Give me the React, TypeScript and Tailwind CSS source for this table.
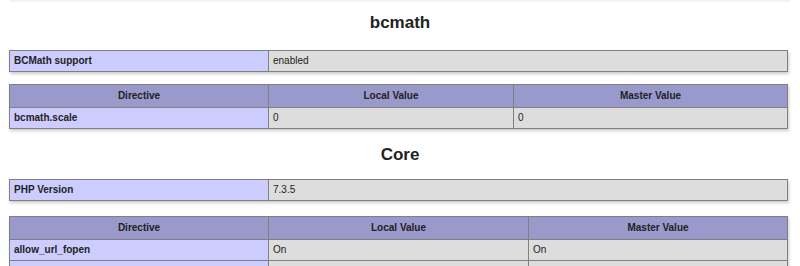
const font = { fontFamily: '"Liberation Sans", Arial, Helvetica, sans-serif' };

type Row = string[];

function InfoTable({ head, rows, cols }: { head?: string[]; rows: Row[]; cols: number[] }) {
  return (
    <table className="mx-[9px] w-[778px] table-fixed border-collapse shadow-[1px_2px_3px_#ccc]">
      <colgroup>
        {cols.map((w, i) => (
          <col key={i} style={{ width: w }} />
        ))}
      </colgroup>
      <tbody>
        {head && (
          <tr>
            {head.map((h) => (
              <th
                key={h}
                className="h-[23px] border border-[#808080] bg-[#9999cc] px-[4px] py-0 text-center text-[10px] leading-[12px] font-bold text-[#222]"
              >
                {h}
              </th>
            ))}
          </tr>
        )}
        {rows.map((r, i) => (
          <tr key={i}>
            {r.map((c, j) => (
              <td
                key={j}
                className={
                  j === 0
                    ? "h-[21px] border border-[#808080] bg-[#ccccff] px-[4px] py-0 text-left text-[10px] leading-[12px] font-bold text-[#222]"
                    : "h-[21px] border border-[#808080] bg-[#dddddd] px-[4px] py-0 text-left text-[10px] leading-[12px] text-[#222]"
                }
              >
                {c}
              </td>
            ))}
          </tr>
        ))}
      </tbody>
    </table>
  );
}

export default function App() {
  return (
    <div className="h-[266px] w-[800px] overflow-hidden bg-white text-[#222]" style={font}>
      <div className="ml-[10px] h-[2px] w-[780px] bg-[#f3f3f3]" />

      <h2 className="mt-[11px] text-center text-[17px] leading-[20px] font-bold">bcmath</h2>
      <div className="mt-[17px]">
        <InfoTable cols={[259, 519]} rows={[["BCMath support", "enabled"]]} />
      </div>
      <div className="mt-[12px]">
        <InfoTable
          cols={[259, 245, 274]}
          head={["Directive", "Local Value", "Master Value"]}
          rows={[["bcmath.scale", "0", "0"]]}
        />
      </div>

      <h2 className="mt-[16px] text-center text-[17px] leading-[20px] font-bold">Core</h2>
      <div className="mt-[14px]">
        <InfoTable cols={[259, 519]} rows={[["PHP Version", "7.3.5"]]} />
      </div>
      <div className="mt-[15px]">
        <InfoTable
          cols={[259, 260, 259]}
          head={["Directive", "Local Value", "Master Value"]}
          rows={[
            ["allow_url_fopen", "On", "On"],
            ["", "", ""],
          ]}
        />
      </div>
    </div>
  );
}
